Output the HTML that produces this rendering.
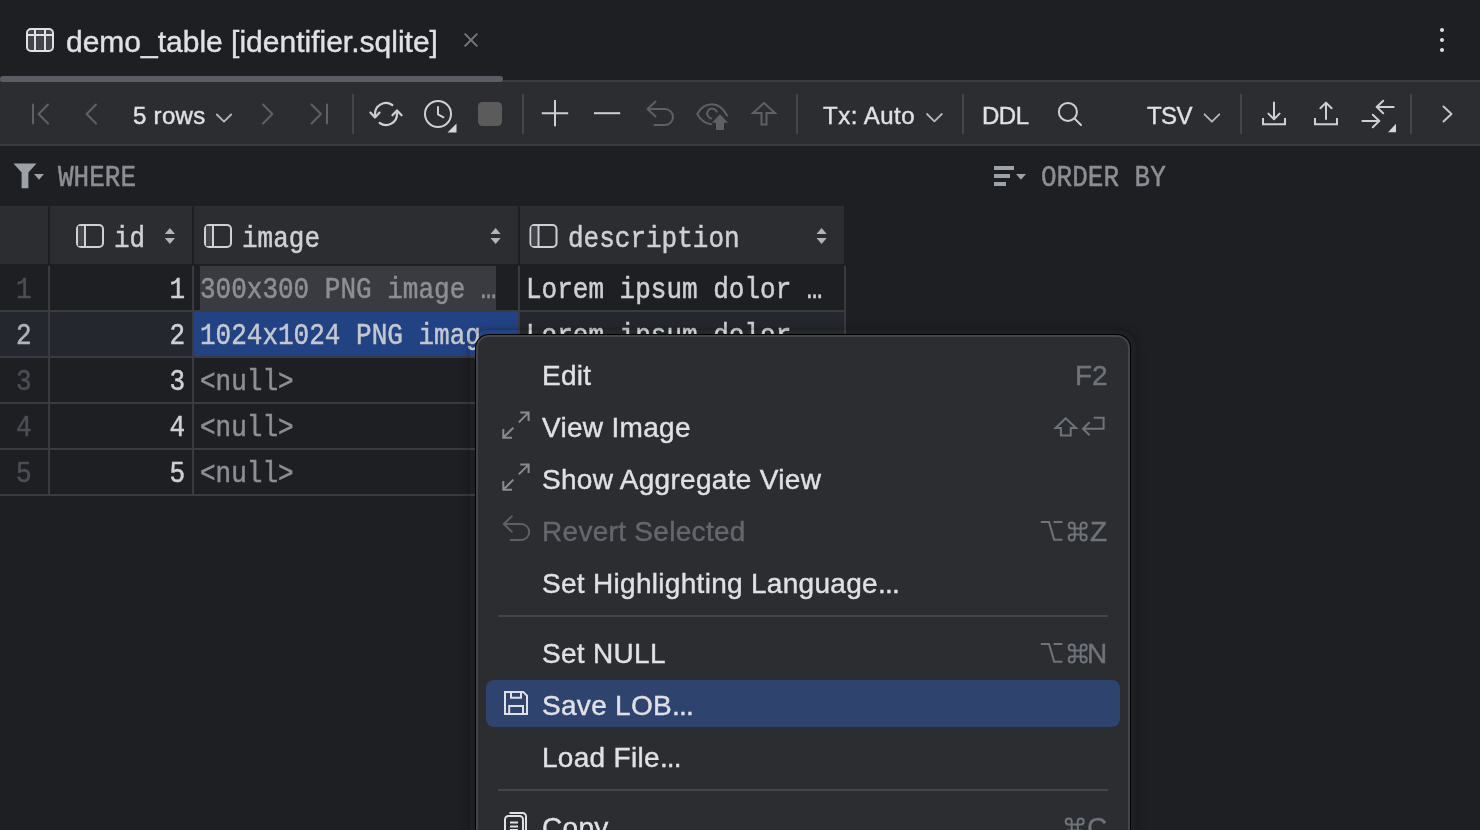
<!DOCTYPE html>
<html><head><meta charset="utf-8">
<style>
html,body{margin:0;padding:0;}
body{width:1480px;height:830px;overflow:hidden;position:relative;background:#1e1f22;font-family:"Liberation Sans",sans-serif;color:#dfe1e5;}
.a{position:absolute;}
.t{position:absolute;white-space:pre;line-height:1;font-family:"Liberation Sans",sans-serif;will-change:transform;-webkit-text-stroke:0.4px currentColor;}
.m{position:absolute;white-space:pre;line-height:1;font-family:"Liberation Mono",monospace;font-size:26px;transform:scaleY(1.15);transform-origin:0 20px;-webkit-text-stroke:0.45px currentColor;will-change:transform;}
svg{position:absolute;overflow:visible;}
.pm{left:542px;font-size:28px;color:#dfe1e5;letter-spacing:0.3px;}
.ps{font-size:28px;color:#6f737a;}
</style></head><body>

<!-- TAB BAR -->
<svg style="left:26px;top:28px" width="28" height="24" viewBox="0 0 28 24">
  <rect x="1" y="1" width="26" height="22" rx="4" fill="#43454a" stroke="#dfe1e5" stroke-width="2"/>
  <line x1="1" y1="7" x2="27" y2="7" stroke="#dfe1e5" stroke-width="2"/>
  <line x1="9" y1="1" x2="9" y2="23" stroke="#dfe1e5" stroke-width="2"/>
  <line x1="19" y1="1" x2="19" y2="23" stroke="#dfe1e5" stroke-width="2"/>
</svg>
<div class="t" style="left:66px;top:26.6px;font-size:30px;color:#dfe1e5">demo_table [identifier.sqlite]</div>
<svg style="left:464px;top:33px" width="14" height="14" viewBox="0 0 14 14">
  <path d="M0.7 0.7L13.3 13.3M13.3 0.7L0.7 13.3" stroke="#75797f" stroke-width="1.9"/>
</svg>
<div class="a" style="left:1440px;top:28px;width:4px;height:4px;border-radius:2px;background:#dfe1e5"></div>
<div class="a" style="left:1440px;top:38px;width:4px;height:4px;border-radius:2px;background:#dfe1e5"></div>
<div class="a" style="left:1440px;top:48px;width:4px;height:4px;border-radius:2px;background:#dfe1e5"></div>

<!-- TOOLBAR -->
<div class="a" style="left:0;top:80px;width:1480px;height:2px;background:#393b40"></div>
<div class="a" style="left:0;top:82px;width:1480px;height:62px;background:#2b2d30"></div>
<div class="a" style="left:0;top:144px;width:1480px;height:2px;background:#393b40"></div>
<div class="a" style="left:0;top:76px;width:503px;height:6px;background:#5a5d63;border-radius:3px"></div>

<!-- toolbar icons -->
<svg style="left:0;top:0" width="1480" height="160" viewBox="0 0 1480 160" fill="none" stroke-linecap="round" stroke-linejoin="round">
  <g stroke="#5f6166" stroke-width="2">
    <path d="M33 104.5V123.5M48 104.5L38.6 114L48 123.5"/>
    <path d="M96 104.5L86.6 114L96 123.5"/>
    <path d="M263 104.5L272.4 114L263 123.5"/>
    <path d="M311.5 104.5L320.9 114L311.5 123.5M327 104.5V123.5"/>
  </g>
  <g stroke="#43454a" stroke-width="2" stroke-linecap="butt">
    <path d="M353 94V134M523 94V134M797 94V134M963 94V134M1241 94V134M1411 94V134"/>
  </g>
  <g stroke="#b4b8bf" stroke-width="1.8">
    <path d="M216.8 114.5L224 121.6L231.2 114.5"/>
    <path d="M927 114L934.4 121.4L941.8 114"/>
    <path d="M1204.5 114.3L1211.9 121.7L1219.3 114.3"/>
  </g>
  <g stroke="#ced0d6" stroke-width="2.2">
    <path d="M392.3 105A11 11 0 0 0 375 114.5M370.4 112.6L375 117.4L379.6 112.6"/>
    <path d="M379.7 123A11 11 0 0 0 397 113.5M392.4 115.3L397 110.4L401.6 115.3"/>
  </g>
  <g stroke="#ced0d6" stroke-width="2">
    <circle cx="438" cy="114" r="13"/>
    <path d="M438 107V114.3L443.5 117.3"/>
    <path d="M555 100V126.2M541.8 113.2H568.2" stroke-linecap="butt"/>
    <path d="M594 113.2H620.2" stroke-linecap="butt"/>
    <circle cx="1067.9" cy="111.9" r="9"/>
    <path d="M1074.6 118.6L1081 125"/>
    <path d="M1263 118V124.2H1285V118" stroke-linecap="butt" stroke-linejoin="miter"/>
    <path d="M1274 102.5V118.5M1268.4 113.6L1274 119.2L1279.6 113.6"/>
    <path d="M1315 118V124.2H1337V118" stroke-linecap="butt" stroke-linejoin="miter"/>
    <path d="M1326 103V119M1320.4 108.3L1326 102.6L1331.6 108.3"/>
    <path d="M1376.6 106.9H1393.6M1383.2 100.8L1376.6 106.9L1383.2 113.2"/>
    <path d="M1362.4 120.9H1379.4M1372.8 114.8L1379.4 120.9L1372.8 127.2"/>
  </g>
  <path d="M1443.5 106.5L1451.5 114L1443.5 121.5" stroke="#c4c6cc" stroke-width="2"/>
  <g fill="#d5d7dc">
    <path d="M456.5 123.5V132.5H447.5Z"/>
    <path d="M1396 123.7V132.2H1388Z"/>
  </g>
  <rect x="478" y="102" width="24" height="24" rx="4.5" fill="#5b5b5b"/>
  <g stroke="#5e6065" stroke-width="2">
    <path d="M655.5 101.5L647.5 109L655.5 116.5M647.5 109H665A8 8 0 0 1 665 125H654.5"/>
    <path d="M727 115.5C723 108 718 104.3 712 104.3C706 104.3 700.5 108 697.2 114C700.5 120 705 123.5 711 124.2"/>
    <path d="M716.8 111.6A5 5 0 1 0 711.2 118.5"/>
    <path d="M764 103L753 113H761.5V124.5H766.5V113H775Z" stroke-linejoin="miter" stroke-linecap="butt"/>
  </g>
  <path d="M720 114.2L728 122.7H724V130H716V122.7H712Z" fill="#5e6065"/>
</svg>
<div class="t" style="left:132.5px;top:103.7px;font-size:24px;letter-spacing:0.3px">5 rows</div>
<div class="t" style="left:823px;top:103.7px;font-size:24px;letter-spacing:0.5px">Tx: Auto</div>
<div class="t" style="left:982px;top:103.7px;font-size:24px;letter-spacing:-0.5px">DDL</div>
<div class="t" style="left:1146.5px;top:103.7px;font-size:24px;letter-spacing:-0.6px">TSV</div>

<!-- WHERE / ORDER BY -->
<svg style="left:0;top:150px" width="1480" height="50" viewBox="0 150 1480 50">
  <path d="M13.5 163.5H36.5L28.4 172.5V188.2H21.6V172.5Z" fill="#9da1a8"/>
  <path d="M34 174H44L39 179.8Z" fill="#9da1a8"/>
  <rect x="994" y="166" width="20" height="4" fill="#9da1a8"/>
  <rect x="994" y="174" width="16" height="4" fill="#9da1a8"/>
  <rect x="994" y="182" width="12" height="4" fill="#9da1a8"/>
  <path d="M1016 174H1026L1021 179.8Z" fill="#9da1a8"/>
</svg>
<div class="m" style="left:58px;top:166.3px;color:#8b8e94">WHERE</div>
<div class="m" style="left:1041px;top:166.3px;color:#8b8e94">ORDER BY</div>

<!-- GRID HEADER -->
<div class="a" style="left:0;top:206px;width:48px;height:58px;background:#2b2d30"></div>
<div class="a" style="left:50px;top:206px;width:142px;height:58px;background:#2b2d30"></div>
<div class="a" style="left:194px;top:206px;width:324px;height:58px;background:#2b2d30"></div>
<div class="a" style="left:520px;top:206px;width:324px;height:58px;background:#2b2d30"></div>

<!-- rows backgrounds & lines -->
<div class="a" style="left:0;top:312px;width:846px;height:44px;background:#25272e"></div>
<div class="a" style="left:200px;top:266px;width:296px;height:44px;background:#393b40"></div>
<div class="a" style="left:194px;top:312px;width:324px;height:44px;background:#214283"></div>
<div class="a" style="left:0;top:264px;width:846px;height:2px;background:#1e1f22"></div>
<div class="a" style="left:0;top:310px;width:846px;height:2px;background:#393b40"></div>
<div class="a" style="left:0;top:356px;width:846px;height:2px;background:#393b40"></div>
<div class="a" style="left:0;top:402px;width:846px;height:2px;background:#393b40"></div>
<div class="a" style="left:0;top:448px;width:846px;height:2px;background:#393b40"></div>
<div class="a" style="left:0;top:494px;width:846px;height:2px;background:#393b40"></div>
<div class="a" style="left:48px;top:266px;width:2px;height:230px;background:#393b40"></div>
<div class="a" style="left:192px;top:266px;width:2px;height:230px;background:#393b40"></div>
<div class="a" style="left:518px;top:266px;width:2px;height:230px;background:#393b40"></div>
<div class="a" style="left:844px;top:266px;width:2px;height:230px;background:#393b40"></div>

<!-- header icons -->
<svg style="left:0;top:200px" width="900" height="60" viewBox="0 200 900 60">
  <g stroke="#ced0d6" stroke-width="2" fill="none">
    <rect x="77" y="225" width="26" height="22" rx="4"/>
    <rect x="205" y="225" width="26" height="22" rx="4"/>
    <rect x="530.5" y="225" width="26" height="22" rx="4"/>
  </g>
  <g fill="#43454a">
    <rect x="78" y="226" width="6" height="20"/>
    <rect x="206" y="226" width="6" height="20"/>
    <rect x="531.5" y="226" width="6" height="20"/>
  </g>
  <g stroke="#ced0d6" stroke-width="2">
    <path d="M85 225V247M213 225V247M538.5 225V247"/>
  </g>
  <g fill="#b2b4b8">
    <path d="M164.8 234H175L169.9 228Z M164.8 238H175L169.9 244Z"/>
    <path d="M490.5 234H500.7L495.6 228Z M490.5 238H500.7L495.6 244Z"/>
    <path d="M816.5 234H826.7L821.6 228Z M816.5 238H826.7L821.6 244Z"/>
  </g>
</svg>
<div class="m" style="left:114px;top:226.7px;color:#ced0d6">id</div>
<div class="m" style="left:242px;top:226.7px;color:#ced0d6">image</div>
<div class="m" style="left:567.5px;top:226.7px;color:#ced0d6">description</div>

<!-- row numbers -->
<div class="m" style="left:0;width:47.5px;text-align:center;top:277.6px;color:#4b4e55">1</div>
<div class="m" style="left:0;width:47.5px;text-align:center;top:323.6px;color:#b0b3b8">2</div>
<div class="m" style="left:0;width:47.5px;text-align:center;top:369.6px;color:#4b4e55">3</div>
<div class="m" style="left:0;width:47.5px;text-align:center;top:415.6px;color:#4b4e55">4</div>
<div class="m" style="left:0;width:47.5px;text-align:center;top:461.6px;color:#4b4e55">5</div>
<!-- id -->
<div class="m" style="left:50px;width:135px;text-align:right;top:277.6px;color:#ced0d6">1</div>
<div class="m" style="left:50px;width:135px;text-align:right;top:323.6px;color:#ced0d6">2</div>
<div class="m" style="left:50px;width:135px;text-align:right;top:369.6px;color:#ced0d6">3</div>
<div class="m" style="left:50px;width:135px;text-align:right;top:415.6px;color:#ced0d6">4</div>
<div class="m" style="left:50px;width:135px;text-align:right;top:461.6px;color:#ced0d6">5</div>
<!-- image -->
<div class="m" style="left:199.5px;top:277.6px;color:#8c8f95">300x300 PNG image …</div>
<div class="m" style="left:199.5px;top:323.6px;color:#c5c8ce">1024x1024 PNG imag</div>
<div class="m" style="left:199.5px;top:369.6px;color:#8c8f95">&lt;null&gt;</div>
<div class="m" style="left:199.5px;top:415.6px;color:#8c8f95">&lt;null&gt;</div>
<div class="m" style="left:199.5px;top:461.6px;color:#8c8f95">&lt;null&gt;</div>
<!-- description -->
<div class="m" style="left:526px;top:277.6px;color:#ced0d6">Lorem ipsum dolor …</div>
<div class="m" style="left:526px;top:323.6px;color:#ced0d6">Lorem ipsum dolor</div>

<!-- POPUP -->
<div class="a" style="left:470px;top:330px;width:666px;height:520px;border-radius:18px;box-shadow:0 0 8px rgba(0,0,0,0.35)"></div>
<div class="a" style="left:475px;top:334px;width:656px;height:520px;border-radius:14px;background:#000"></div>
<div class="a" style="left:476px;top:335px;width:650px;height:520px;border-radius:13px;background:#2b2d30;border:2px solid #43454a"></div>
<div class="a" style="left:486px;top:680px;width:634px;height:47px;border-radius:8px;background:#2e436e"></div>
<div class="a" style="left:498px;top:615px;width:610px;height:2px;background:#43454a"></div>
<div class="a" style="left:498px;top:789px;width:610px;height:2px;background:#43454a"></div>

<div class="t pm" style="top:362.3px">Edit</div>
<div class="t pm" style="top:414.3px">View Image</div>
<div class="t pm" style="top:466.3px">Show Aggregate View</div>
<div class="t pm" style="top:518.3px;color:#64676d">Revert Selected</div>
<div class="t pm" style="top:570.3px">Set Highlighting Language<span style="letter-spacing:-0.8px">...</span></div>
<div class="t pm" style="top:640.3px">Set NULL</div>
<div class="t pm" style="top:692.3px">Save LOB<span style="letter-spacing:-0.8px">...</span></div>
<div class="t pm" style="top:744.3px">Load File<span style="letter-spacing:-0.8px">...</span></div>
<div class="t pm" style="top:814.3px">Copy</div>

<div class="t ps" style="left:1075px;top:362.3px">F2</div>
<div class="t ps" style="left:1090px;top:518.3px">Z</div>
<div class="t ps" style="left:1086.5px;top:640.3px">N</div>
<div class="t ps" style="left:1086.5px;top:814.3px">C</div>

<svg style="left:0;top:0" width="1480" height="830" viewBox="0 0 1480 830" fill="none">
  <g stroke="#878b92" stroke-width="2" stroke-linecap="butt" stroke-linejoin="miter">
    <path d="M520.3 412.6H528.6V420.9M528.6 412.6L518.8 422.4"/>
    <path d="M503.3 429V437.7H512M503.3 437.7L513.4 427.6"/>
    <path d="M520.3 464.6H528.6V472.9M528.6 464.6L518.8 474.4"/>
    <path d="M503.3 481V489.7H512M503.3 489.7L513.4 479.6"/>
  </g>
  <g stroke="#5e6065" stroke-width="2" stroke-linecap="round" stroke-linejoin="round">
    <path d="M511.7 516.5L503.7 524L511.7 531.5M503.7 524H521.2A8 8 0 0 1 521.2 540H510.7"/>
  </g>
  <g stroke="#dfe1e5" stroke-width="2" stroke-linejoin="miter">
    <path d="M505 691.9H523.2L527 695.7V714H505Z"/>
    <path d="M511 692V697.7H521V692"/>
    <path d="M509.2 714V706H523V714"/>
  </g>
  <g stroke="#dfe1e5" stroke-width="2">
    <rect x="505" y="816" width="18" height="20" rx="3.5"/>
    <path d="M509.5 813H522.5A3.5 3.5 0 0 1 526 816.5V830"/>
    <path d="M510 822.5H518M510 826.5H518M510 830H518"/>
  </g>
  <g stroke="#6f737a" stroke-width="2" stroke-linejoin="miter" stroke-linecap="butt">
    <path d="M1065.7 418.3L1055.6 428H1060.9V435.6H1070.7V428H1076L1065.7 418.3Z"/>
    <path d="M1093.6 417.8H1103.6V428.8H1083M1089.6 422.3L1083 428.8L1089.6 435.3"/>
  </g>
  <g stroke="#6f737a" stroke-width="2" stroke-linejoin="miter" stroke-linecap="butt">
    <path d="M1040.8 522H1049L1054.2 539.7H1062.4M1053.6 522H1062.4"/>
    <path d="M1040.8 644H1049L1054.2 661.7H1062.4M1053.6 644H1062.4"/>
  </g>
  <g stroke="#6f737a" stroke-width="2">
    <path id="cmd" d="M1074.7 528.5V534.5M1080.7 528.5V534.5M1074.7 528.5H1080.7M1074.7 534.5H1080.7M1074.7 528.5V525.5A3 3 0 1 0 1071.7 528.5H1083.7A3 3 0 1 0 1080.7 525.5V537.5A3 3 0 1 0 1083.7 534.5H1071.7A3 3 0 1 0 1074.7 537.5V528.5"/>
    <use href="#cmd" transform="translate(0 122)"/>
    <use href="#cmd" transform="translate(-3 296)"/>
  </g>
</svg>

</body></html>
